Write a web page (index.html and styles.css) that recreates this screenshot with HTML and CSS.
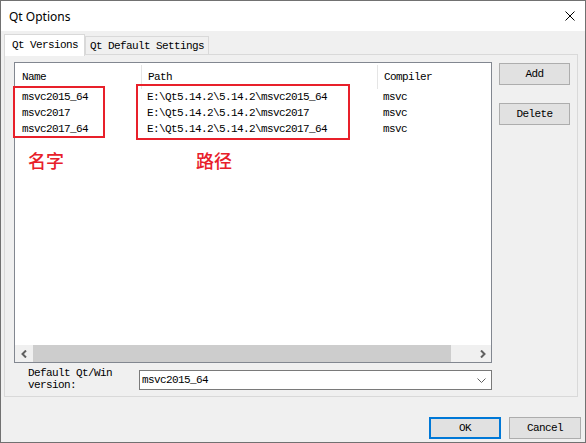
FILE: index.html
```html
<!DOCTYPE html>
<html lang="en">
<head>
  <meta charset="UTF-8">
  <meta name="viewport" content="width=device-width, initial-scale=1.0">
  <title>Qt Options</title>
  <link rel="stylesheet" href="styles.css">
</head>
<body>

  <div class="window">
    <div class="titlebar">
      <span class="title">Qt Options</span>
      <svg class="close" width="10" height="10" viewBox="0 0 10 10">
        <path d="M0.5 0.5 L9.5 9.5 M9.5 0.5 L0.5 9.5" stroke="#000" stroke-width="1" fill="none"/>
      </svg>
    </div>

    <div class="client">
      <div class="tabs">
        <div class="tab active">Qt Versions</div>
        <div class="tab">Qt Default Settings</div>
      </div>

      <div class="pane">
        <div class="pane-top">
          <div class="tree">
            <div class="tree-row tree-head">
              <div class="cell">Name</div>
              <div class="cell sep">Path</div>
              <div class="cell sep">Compiler</div>
            </div>
            <div class="tree-row">
              <div class="cell">msvc2015_64</div>
              <div class="cell">E:\Qt5.14.2\5.14.2\msvc2015_64</div>
              <div class="cell">msvc</div>
            </div>
            <div class="tree-row">
              <div class="cell">msvc2017</div>
              <div class="cell">E:\Qt5.14.2\5.14.2\msvc2017</div>
              <div class="cell">msvc</div>
            </div>
            <div class="tree-row">
              <div class="cell">msvc2017_64</div>
              <div class="cell">E:\Qt5.14.2\5.14.2\msvc2017_64</div>
              <div class="cell">msvc</div>
            </div>
            <div class="tree-fill"></div>
            <div class="hscroll">
              <div class="arrow">
                <svg width="6" height="8" viewBox="0 0 6 8"><path d="M5 0.5 L1.5 4 L5 7.5" stroke="#606060" stroke-width="2" fill="none"/></svg>
              </div>
              <div class="thumb"></div>
              <div class="track"></div>
              <div class="arrow">
                <svg width="6" height="8" viewBox="0 0 6 8"><path d="M1 0.5 L4.5 4 L1 7.5" stroke="#606060" stroke-width="2" fill="none"/></svg>
              </div>
            </div>
          </div>

          <div class="side-buttons">
            <button class="btn">Add</button>
            <button class="btn">Delete</button>
          </div>
        </div>

        <div class="default-row">
          <div class="default-label">Default Qt/Win<br>version:</div>
          <div class="combo">
            <span>msvc2015_64</span>
            <svg width="9" height="5" viewBox="0 0 9 5"><path d="M0.5 0.5 L4.5 4.5 L8.5 0.5" stroke="#606060" stroke-width="1" fill="none"/></svg>
          </div>
        </div>
      </div>

      <div class="dialog-buttons">
        <button class="btn default">OK</button>
        <button class="btn">Cancel</button>
      </div>
    </div>

    <!-- red notes drawn over the list -->
    <div class="note-box name-box"></div>
    <div class="note-box path-box"></div>
    <div class="note-text name-note">名字</div>
    <div class="note-text path-note">路径</div>
  </div>

</body>
</html>
```

FILE: styles.css
```css
body {
  margin: 0;
  background: #f0f0f0;
}

.window {
  position: relative;
  width: 586px;
  height: 443px;
  box-sizing: border-box;
  border: 1px solid #717171;
  background: #f0f0f0;
  font-family: 'Liberation Mono', 'DejaVu Sans Mono', monospace;
  font-size: 11px;
  letter-spacing: -0.6px;
  color: #000;
}

.titlebar {
  height: 30px;
  background: #fff;
  display: flex;
  align-items: center;
  justify-content: space-between;
  padding: 0 10px 0 8px;
}

.title {
  font-family: 'Noto Sans', sans-serif;
  font-size: 12px;
  letter-spacing: 0;
}

.client {
  padding: 3px 0 0 3px;
}

/* tab bar */
.tabs {
  display: flex;
  align-items: flex-end;
  height: 20px;
}

.tab {
  box-sizing: border-box;
  height: 18px;
  padding: 0 4px;
  border: 1px solid #d9d9d9;
  border-bottom: none;
  background: #f0f0f0;
  display: flex;
  align-items: center;
}

.tab.active {
  position: relative;
  z-index: 1;
  height: 22px;
  width: 81px;
  margin-bottom: -2px;
  padding: 0 0 2px 7px;
  background: #fff;
}

.pane {
  box-sizing: border-box;
  width: 574px;
  height: 343px;
  border: 1px solid #d9d9d9;
  padding: 7px 0 0 9px;
}

.pane-top {
  display: flex;
  gap: 7px;
}

/* list of versions */
.tree {
  box-sizing: border-box;
  width: 478px;
  height: 301px;
  border: 1px solid #828790;
  padding-top: 1px;
  background: #fff;
  display: flex;
  flex-direction: column;
}

.tree-row {
  display: grid;
  grid-template-columns: 126px 236px 1fr;
  height: 16px;
  align-items: center;
}

.tree-head {
  height: 25px;
  align-items: stretch;
}

.tree-head .cell {
  display: flex;
  align-items: center;
  margin-top: 1px;
}

.cell {
  padding-left: 6px;
  white-space: nowrap;
}

.cell:first-child {
  padding-left: 7px;
}

.cell.sep {
  border-left: 1px solid #e5e5e5;
}

.tree-fill {
  flex: 1;
}

.hscroll {
  height: 17px;
  display: flex;
  background: #f0f0f0;
}

.arrow {
  width: 17px;
  display: flex;
  align-items: center;
  justify-content: center;
}

.thumb {
  width: 418px;
  margin-left: 1px;
  background: #cdcdcd;
}

.track {
  flex: 1;
}

.side-buttons {
  display: flex;
  flex-direction: column;
  gap: 18px;
  padding-top: 1px;
}

.btn {
  box-sizing: border-box;
  width: 72px;
  height: 22px;
  padding: 0;
  border: 1px solid #adadad;
  background: #e1e1e1;
  font-family: 'Liberation Mono', 'DejaVu Sans Mono', monospace;
  font-size: 11px;
  letter-spacing: -0.6px;
  color: #000;
}

.side-buttons .btn {
  width: 71px;
}

.btn.default {
  border: 2px solid #0078d7;
}

/* default version picker */
.default-row {
  display: flex;
  margin-top: 7px;
}

.default-label {
  width: 111px;
  margin-left: 14px;
  margin-top: -3px;
  line-height: 12px;
}

.combo {
  box-sizing: border-box;
  width: 353px;
  height: 20px;
  border: 1px solid #7a7a7a;
  background: #fff;
  display: flex;
  align-items: center;
  justify-content: space-between;
  padding: 0 5px 0 2px;
}

.dialog-buttons {
  display: flex;
  justify-content: flex-end;
  gap: 8px;
  margin-top: 20px;
  padding-right: 4px;
}

/* red markup */
.note-box {
  position: absolute;
  box-sizing: border-box;
  border: 2px solid #e8202a;
}

.name-box {
  left: 12px;
  top: 85px;
  width: 92px;
  height: 52px;
}

.path-box {
  left: 135px;
  top: 83px;
  width: 214px;
  height: 56px;
}

.note-text {
  position: absolute;
  top: 147px;
  font-family: 'Noto Sans CJK SC', sans-serif;
  font-size: 18px;
  font-weight: 500;
  line-height: 24px;
  letter-spacing: 0;
  color: #e8202a;
}

.name-note {
  left: 27px;
}

.path-note {
  left: 195px;
}
```
